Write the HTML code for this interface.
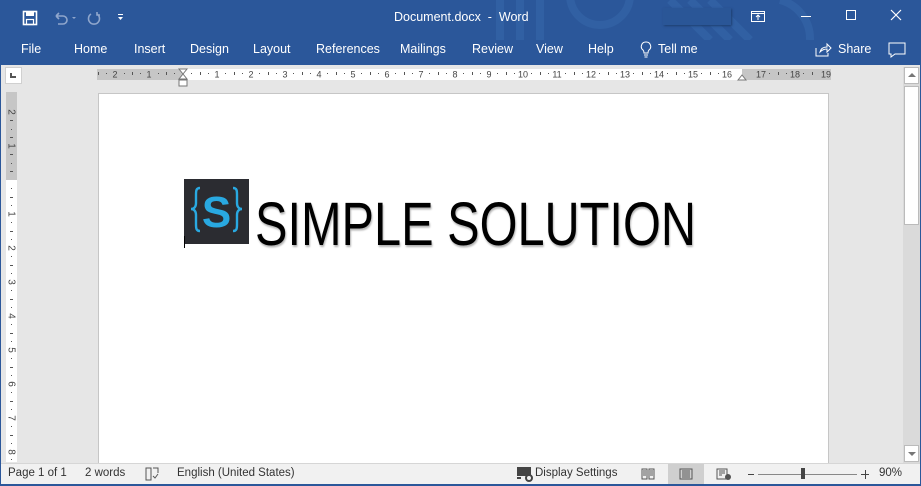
<!DOCTYPE html>
<html><head><meta charset="utf-8"><style>
*{margin:0;padding:0;box-sizing:border-box}
body{width:921px;height:486px;overflow:hidden;position:relative;background:#e6e6e6;font-family:"Liberation Sans",sans-serif}
.a{position:absolute}
.tb{left:0;top:0;width:921px;height:65px;background:#2b579a}
.w{color:#fff;font-size:12.5px}
.tab{top:42px;color:#fff;font-size:12.5px}
.st{top:467px;font-size:11.5px;color:#333}
</style></head><body>
<div class="a tb"></div>
<svg class="a" style="left:480px;top:0" width="340" height="40"><g stroke="#3160a3" stroke-width="8" fill="none"><path d="M20 0v40M40 0v40M60 0v40"/><circle cx="120" cy="-5" r="30"/><path d="M190 0l40 40M210 0l40 40M230 0l40 40"/><path d="M300 0a40 40 0 0 1 30 40"/></g></svg>
<svg class="a" style="left:22px;top:10px" width="16" height="16"><rect x="1.5" y="1.5" width="13" height="13" fill="none" stroke="#fff" stroke-width="1.6"/><rect x="4" y="2" width="8" height="4" fill="#fff"/><rect x="4.5" y="9.5" width="7" height="5" fill="none" stroke="#fff" stroke-width="1.2"/></svg>
<svg class="a" style="left:52px;top:10px" width="26" height="16"><path d="M4 6h7a4 4 0 0 1 0 8H6M4 6l3-3M4 6l3 3" stroke="#8fa6cc" stroke-width="1.6" fill="none"/><path d="M20 7l2 2 2-2z" fill="#8fa6cc"/></svg>
<svg class="a" style="left:86px;top:10px" width="16" height="16"><path d="M11 4a5.5 5.5 0 1 1-6 0M11 2v3h3" stroke="#8fa6cc" stroke-width="1.6" fill="none"/></svg>
<svg class="a" style="left:117px;top:13px" width="8" height="8"><rect x="1" y="1" width="5" height="1" fill="#fff"/><path d="M1 4h5l-2.5 3z" fill="#fff"/></svg>
<div class="a w" style="left:394px;top:10px">Document.docx&nbsp; -&nbsp; Word</div>
<div class="a" style="left:663px;top:8px;width:68px;height:17px;background:#2a5697;box-shadow:1px 1px 2px #1d3e70"></div>
<svg class="a" style="left:750px;top:10px" width="16" height="13"><rect x="1.5" y="1.5" width="13" height="10" fill="none" stroke="#fff"/><path d="M1 3.5h14M8 10V5M6 7l2-2 2 2" stroke="#fff" fill="none"/></svg>
<div class="a" style="left:801px;top:16px;width:10px;height:1px;background:#fff"></div>
<div class="a" style="left:846px;top:10px;width:10px;height:10px;border:1px solid #fff"></div>
<svg class="a" style="left:890px;top:9px" width="12" height="12"><path d="M1 1l10 10M11 1L1 11" stroke="#fff" stroke-width="1.2"/></svg>
<div class="tab a" style="left:21px">File</div>
<div class="tab a" style="left:74px">Home</div>
<div class="tab a" style="left:134px">Insert</div>
<div class="tab a" style="left:190px">Design</div>
<div class="tab a" style="left:253px">Layout</div>
<div class="tab a" style="left:316px">References</div>
<div class="tab a" style="left:400px">Mailings</div>
<div class="tab a" style="left:472px">Review</div>
<div class="tab a" style="left:536px">View</div>
<div class="tab a" style="left:588px">Help</div>
<svg class="a" style="left:640px;top:41px" width="12" height="17"><path d="M6 1a4.5 4.5 0 0 0-3 8c1 1 1 2 1 3h4c0-1 0-2 1-3a4.5 4.5 0 0 0-3-8zM4 14h4M4.5 16h3" stroke="#fff" fill="none"/></svg>
<div class="tab a" style="left:658px">Tell me</div>
<svg class="a" style="left:815px;top:42px" width="17" height="15"><path d="M1 6v8h12v-3M5 10c1-4 4-5 7-5V2l4 4-4 4V7c-3 0-5 1-7 3z" stroke="#fff" fill="none"/></svg>
<div class="tab a" style="left:838px">Share</div>
<svg class="a" style="left:888px;top:42px" width="18" height="16"><path d="M1 1h16v11H7l-4 3v-3H1z" stroke="#fff" fill="none"/></svg>
<div class="a" style="left:0;top:65px;width:1px;height:421px;background:#2b579a"></div>
<div class="a" style="left:920px;top:65px;width:1px;height:421px;background:#2b579a"></div>
<div class="a" style="left:5px;top:67px;width:17px;height:17px;background:#fff;border:1px solid #d0d0d0"></div>
<div class="a" style="left:10px;top:73px;width:6px;height:5px;border-left:2px solid #555;border-bottom:2px solid #555"></div>
<div class="a" style="left:97px;top:69px;width:734px;height:11px;background:#fff"></div>
<div class="a" style="left:97px;top:69px;width:86px;height:11px;background:#c6c6c6"></div>
<div class="a" style="left:742px;top:69px;width:89px;height:11px;background:#c6c6c6"></div>
<svg class="a" style="left:0;top:66px" width="921" height="22" font-family="Liberation Sans" font-size="9" fill="#444">
<path d="M179 3h8l-4 5zM179 13h8l-4-5zM179 14h8v6h-8z" fill="#fff" stroke="#777"/>
<path d="M738 14l4-5 4 5z" fill="#fff" stroke="#777"/>
<g text-anchor="middle">
<text x="115" y="11.5">2</text><text x="149" y="11.5">1</text>
<text x="217" y="11.5">1</text><text x="251" y="11.5">2</text><text x="285" y="11.5">3</text><text x="319" y="11.5">4</text><text x="353" y="11.5">5</text><text x="387" y="11.5">6</text><text x="421" y="11.5">7</text><text x="455" y="11.5">8</text><text x="489" y="11.5">9</text><text x="523" y="11.5">10</text><text x="557" y="11.5">11</text><text x="591" y="11.5">12</text><text x="625" y="11.5">13</text><text x="659" y="11.5">14</text><text x="693" y="11.5">15</text><text x="727" y="11.5">16</text><text x="761" y="11.5">17</text><text x="795" y="11.5">18</text><text x="826" y="11.5">19</text>
</g>
<g fill="#555">
<rect x="98" y="6" width="1" height="3"/><rect x="106" y="7" width="1" height="1"/><rect x="124" y="7" width="1" height="1"/><rect x="132" y="6" width="1" height="3"/><rect x="140" y="7" width="1" height="1"/><rect x="158" y="7" width="1" height="1"/><rect x="166" y="6" width="1" height="3"/><rect x="174" y="7" width="1" height="1"/>
<rect x="191" y="7" width="1" height="1"/><rect x="200" y="6" width="1" height="3"/><rect x="208" y="7" width="1" height="1"/>
<rect x="225" y="7" width="1" height="1"/><rect x="234" y="6" width="1" height="3"/><rect x="242" y="7" width="1" height="1"/>
<rect x="259" y="7" width="1" height="1"/><rect x="268" y="6" width="1" height="3"/><rect x="276" y="7" width="1" height="1"/>
<rect x="293" y="7" width="1" height="1"/><rect x="302" y="6" width="1" height="3"/><rect x="310" y="7" width="1" height="1"/>
<rect x="327" y="7" width="1" height="1"/><rect x="336" y="6" width="1" height="3"/><rect x="344" y="7" width="1" height="1"/>
<rect x="361" y="7" width="1" height="1"/><rect x="370" y="6" width="1" height="3"/><rect x="378" y="7" width="1" height="1"/>
<rect x="395" y="7" width="1" height="1"/><rect x="404" y="6" width="1" height="3"/><rect x="412" y="7" width="1" height="1"/>
<rect x="429" y="7" width="1" height="1"/><rect x="438" y="6" width="1" height="3"/><rect x="446" y="7" width="1" height="1"/>
<rect x="463" y="7" width="1" height="1"/><rect x="472" y="6" width="1" height="3"/><rect x="480" y="7" width="1" height="1"/>
<rect x="497" y="7" width="1" height="1"/><rect x="506" y="6" width="1" height="3"/><rect x="514" y="7" width="1" height="1"/>
<rect x="531" y="7" width="1" height="1"/><rect x="540" y="6" width="1" height="3"/><rect x="548" y="7" width="1" height="1"/>
<rect x="565" y="7" width="1" height="1"/><rect x="574" y="6" width="1" height="3"/><rect x="582" y="7" width="1" height="1"/>
<rect x="599" y="7" width="1" height="1"/><rect x="608" y="6" width="1" height="3"/><rect x="616" y="7" width="1" height="1"/>
<rect x="633" y="7" width="1" height="1"/><rect x="642" y="6" width="1" height="3"/><rect x="650" y="7" width="1" height="1"/>
<rect x="667" y="7" width="1" height="1"/><rect x="676" y="6" width="1" height="3"/><rect x="684" y="7" width="1" height="1"/>
<rect x="701" y="7" width="1" height="1"/><rect x="710" y="6" width="1" height="3"/><rect x="718" y="7" width="1" height="1"/>
<rect x="769" y="7" width="1" height="1"/><rect x="778" y="6" width="1" height="3"/><rect x="786" y="7" width="1" height="1"/>
<rect x="803" y="7" width="1" height="1"/><rect x="812" y="6" width="1" height="3"/>
</g>
</svg>
<div class="a" style="left:6px;top:92px;width:11px;height:370px;background:#fff"></div>
<div class="a" style="left:6px;top:92px;width:11px;height:88px;background:#c6c6c6"></div>
<svg class="a" style="left:6px;top:92px" width="11" height="370" font-family="Liberation Sans" font-size="10" fill="#444">
<g text-anchor="middle">
<text transform="translate(2.5 20) rotate(90)">2</text><text transform="translate(2.5 54) rotate(90)">1</text>
<text transform="translate(2.5 122) rotate(90)">1</text><text transform="translate(2.5 156) rotate(90)">2</text><text transform="translate(2.5 190) rotate(90)">3</text><text transform="translate(2.5 224) rotate(90)">4</text><text transform="translate(2.5 258) rotate(90)">5</text><text transform="translate(2.5 292) rotate(90)">6</text><text transform="translate(2.5 326) rotate(90)">7</text><text transform="translate(2.5 360) rotate(90)">8</text>
</g>
<g fill="#555">
<rect x="5" y="37" width="1" height="1"/><rect x="4" y="28" width="3" height="1"/><rect x="4" y="45" width="3" height="1"/><rect x="4" y="62" width="3" height="1"/><rect x="5" y="71" width="1" height="1"/><rect x="4" y="79" width="3" height="1"/>
<rect x="5" y="96" width="1" height="1"/><rect x="4" y="105" width="3" height="1"/><rect x="5" y="113" width="1" height="1"/>
<rect x="5" y="130" width="1" height="1"/><rect x="4" y="139" width="3" height="1"/><rect x="5" y="147" width="1" height="1"/>
<rect x="5" y="164" width="1" height="1"/><rect x="4" y="173" width="3" height="1"/><rect x="5" y="181" width="1" height="1"/>
<rect x="5" y="198" width="1" height="1"/><rect x="4" y="207" width="3" height="1"/><rect x="5" y="215" width="1" height="1"/>
<rect x="5" y="232" width="1" height="1"/><rect x="4" y="241" width="3" height="1"/><rect x="5" y="249" width="1" height="1"/>
<rect x="5" y="266" width="1" height="1"/><rect x="4" y="275" width="3" height="1"/><rect x="5" y="283" width="1" height="1"/>
<rect x="5" y="300" width="1" height="1"/><rect x="4" y="309" width="3" height="1"/><rect x="5" y="317" width="1" height="1"/>
<rect x="5" y="334" width="1" height="1"/><rect x="4" y="343" width="3" height="1"/><rect x="5" y="351" width="1" height="1"/><rect x="5" y="367" width="1" height="1"/>
</g>
</svg>
<div class="a" style="left:98px;top:93px;width:731px;height:375px;background:#fff;border:1px solid #c6c6c6"></div>
<svg class="a" style="left:184px;top:179px" width="65" height="65">
<rect width="65" height="65" fill="#2b2c31"/>
<path d="M16 9c-4 0-4 3-4 7v8c0 4-2 6-5 6 3 0 5 2 5 6v9c0 4 0 7 4 7" stroke="#29a9e1" stroke-width="2.4" fill="none"/>
<path d="M49 9c4 0 4 3 4 7v8c0 4 2 6 5 6-3 0-5 2-5 6v9c0 4 0 7-4 7" stroke="#29a9e1" stroke-width="2.4" fill="none"/>
<text x="32.5" y="48" text-anchor="middle" font-family="Liberation Sans" font-weight="bold" font-size="44" fill="#29a9e1">S</text>
</svg>
<div class="a" style="left:184px;top:236px;width:1px;height:12px;background:#000"></div>
<svg class="a" style="left:250px;top:190px" width="460" height="70">
<text transform="scale(1 1.15)" x="5" y="47.8" textLength="441" lengthAdjust="spacingAndGlyphs" font-family="Liberation Sans" font-size="53" fill="#000" style="text-shadow:1px 2px 2px rgba(0,0,0,.3)">SIMPLE SOLUTION</text>
</svg>
<div class="a" style="left:903px;top:67px;width:17px;height:396px;background:#dadada"></div>
<div class="a" style="left:904px;top:67px;width:15px;height:17px;background:#fff;border:1px solid #bbb"></div>
<svg class="a" style="left:908px;top:72px" width="8" height="6"><path d="M0 5l4-4 4 4z" fill="#777"/></svg>
<div class="a" style="left:904px;top:86px;width:15px;height:139px;background:#fff;border:1px solid #bbb"></div>
<div class="a" style="left:904px;top:445px;width:15px;height:17px;background:#fff;border:1px solid #bbb"></div>
<svg class="a" style="left:908px;top:451px" width="8" height="6"><path d="M0 1l4 4 4-4z" fill="#777"/></svg>
<div class="a" style="left:1px;top:463px;width:919px;height:21px;background:#f1f1f1;border-top:1px solid #d6d6d6"></div>
<div class="a" style="left:0;top:484px;width:921px;height:2px;background:#2b579a"></div>
<div class="a st" style="left:8px">Page 1 of 1</div>
<div class="a st" style="left:85px">2 words</div>
<svg class="a" style="left:145px;top:467px" width="14" height="14"><path d="M1 1h5v12H1zM8 1h5v5M8 9l2 2 3-4" stroke="#555" fill="none"/></svg>
<div class="a st" style="left:177px">English (United States)</div>
<svg class="a" style="left:517px;top:466px" width="17" height="16"><rect x="0" y="1" width="14" height="9" fill="#444"/><rect x="0" y="11" width="4" height="2" fill="#444"/><circle cx="12" cy="12" r="3" fill="none" stroke="#444" stroke-width="2"/></svg>
<div class="a st" style="left:535px">Display Settings</div>
<svg class="a" style="left:641px;top:468px" width="14" height="12"><path d="M1 1h5v10H1zM8 1h5v10H8zM2 3h3M2 5h3M2 7h3M9 3h3M9 5h3M9 7h3" stroke="#555" fill="none"/></svg>
<div class="a" style="left:668px;top:464px;width:36px;height:20px;background:#cfcfcf"></div>
<svg class="a" style="left:679px;top:468px" width="14" height="12"><path d="M1 1h12v10H1zM3 3h8M3 5h8M3 7h8M3 9h8" stroke="#555" fill="none"/></svg>
<svg class="a" style="left:716px;top:468px" width="16" height="13"><path d="M1 1h10v10H1zM3 3h6M3 5h6M3 7h3" stroke="#555" fill="none"/><circle cx="12" cy="9" r="3" fill="#555"/></svg>
<div class="a" style="left:748px;top:474px;width:6px;height:1px;background:#444"></div>
<div class="a" style="left:758px;top:474px;width:99px;height:1px;background:#888"></div>
<div class="a" style="left:801px;top:468px;width:4px;height:11px;background:#444"></div>
<div class="a" style="left:861px;top:474px;width:8px;height:1px;background:#444"></div>
<div class="a" style="left:864.5px;top:470px;width:1px;height:9px;background:#444"></div>
<div class="a st" style="left:879px">90%</div>
</body></html>
